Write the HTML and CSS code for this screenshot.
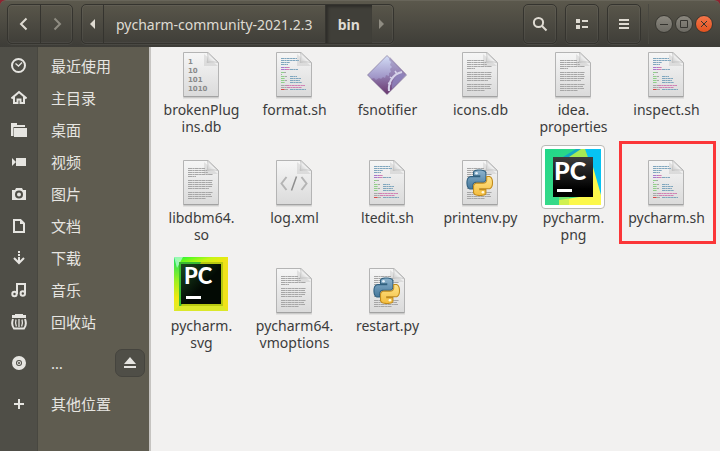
FILE: index.html
```
<!DOCTYPE html>
<html lang="zh-CN">
<head>
    <meta charset="UTF-8">
    <meta name="viewport" content="width=device-width, initial-scale=1.0">
    <title>bin</title>
    <link rel="stylesheet" href="styles.css">
</head>
<body>

<!-- Shared icon shapes -->
<svg class="defs" width="0" height="0" aria-hidden="true">
    <defs>
        <linearGradient id="paper" x1="0" y1="0" x2="0" y2="1">
            <stop offset="0" stop-color="#f6f6f6"/>
            <stop offset="1" stop-color="#dadada"/>
        </linearGradient>
        <linearGradient id="fold" x1="1" y1="0" x2="0" y2="1">
            <stop offset="0.4" stop-color="#ffffff"/>
            <stop offset="1" stop-color="#c4c4c4"/>
        </linearGradient>
        <linearGradient id="py-blue" x1="0" y1="0" x2="0" y2="1">
            <stop offset="0" stop-color="#8db3cd"/>
            <stop offset="1" stop-color="#45789c"/>
        </linearGradient>
        <linearGradient id="py-gold" x1="0" y1="1" x2="0" y2="0">
            <stop offset="0" stop-color="#ffe58c"/>
            <stop offset="1" stop-color="#f5bd3d"/>
        </linearGradient>
        <linearGradient id="gem" x1="0" y1="0" x2="0" y2="1">
            <stop offset="0" stop-color="#d3ddf6"/>
            <stop offset="0.55" stop-color="#a197c8"/>
            <stop offset="1" stop-color="#6d3b70"/>
        </linearGradient>
        <linearGradient id="gem-dark" x1="0" y1="0" x2="0" y2="1">
            <stop offset="0" stop-color="#8c7db0"/>
            <stop offset="1" stop-color="#65316a"/>
        </linearGradient>
        <linearGradient id="ink" x1="0" y1="0" x2="0" y2="1">
            <stop offset="0" stop-color="#3c3c3c"/>
            <stop offset="0.8" stop-color="#000000"/>
        </linearGradient>
        <linearGradient id="ink-green" x1="0" y1="0" x2="1" y2="1">
            <stop offset="0" stop-color="#1c4a20"/>
            <stop offset="0.55" stop-color="#030a04"/>
        </linearGradient>
        <linearGradient id="teal" x1="0" y1="0" x2="1" y2="1">
            <stop offset="0" stop-color="#21d789"/>
            <stop offset="1" stop-color="#48dc88"/>
        </linearGradient>
        <linearGradient id="bevel" x1="0" y1="0" x2="1" y2="0.4">
            <stop offset="0" stop-color="#12e85a"/>
            <stop offset="0.3" stop-color="#5cfa20"/>
            <stop offset="0.65" stop-color="#c8f514"/>
            <stop offset="1" stop-color="#f5e310"/>
        </linearGradient>
        <linearGradient id="bevel-left" x1="0" y1="0" x2="0" y2="1">
            <stop offset="0" stop-color="#0fe060"/>
            <stop offset="0.45" stop-color="#a0f020"/>
            <stop offset="0.75" stop-color="#f0e810"/>
            <stop offset="1" stop-color="#e2ec30"/>
        </linearGradient>

        <symbol id="sheet" viewBox="0 0 48 48">
            <path d="M6 47h36" stroke="#000" stroke-opacity="0.12" stroke-width="1"/>
            <path d="M6.500 1.500h24.500l10.500 10v34.500h-35z" fill="url(#paper)" stroke="#b4b4b4"/>
            <path d="M7 45.500h34" stroke="#a2a2a2"/>
            <path d="M27 3v12h14" fill="#000" opacity="0.08"/>
            <path d="M30.500 2c.8 3 .4 6-.5 9.500 4-.9 8-.8 11 .2z" fill="url(#fold)" stroke="#bdbdbd" stroke-width="0.700"/>
        </symbol>

        <symbol id="file-text" viewBox="0 0 48 48">
            <use href="#sheet"/>
            <path d="M11 9.500h17M11 11.500h19M11 13.500h20M11 15.500h25M11 17.500h8M11 21.500h25M11 23.500h24M11 25.500h25M11 27.500h24M11 29.500h21M11 33.500h25M11 35.500h23M11 37.500h24M11 39.500h18" stroke="#a6a6a6" stroke-dasharray="4 .4 2 .3" fill="none"/>
        </symbol>

        <symbol id="file-script" viewBox="0 0 48 48">
            <use href="#sheet"/>
            <g fill="none" stroke-dasharray="3 .4 2 .3">
                <path d="M11 7.500h16M11 9.500h18M11 11.500h9M11 13.500h7M20 18.500h8M20 25.500h7M20 27.500h11M20 29.500h10M20 31.500h12M20 38.500h16" stroke="#7fa6be"/>
                <path d="M11 16.500h5M11 18.500h5" stroke="#a878cc"/>
                <path d="M16 16.500h4M16 18.500h4M16 34.500h19M17 36.500h15" stroke="#d07fb4"/>
                <path d="M11 21.500h3M11 25.500h4M11 27.500h4M11 29.500h4M11 31.500h4" stroke="#8fd088"/>
                <path d="M14 21.500h2M11 23.500h1M15 25.500h2M15 29.500h2M11 34.500h5M11 36.500h6M15 38.500h3" stroke="#a8a8a8"/>
                <path d="M11 38.500h4" stroke="#d84a4a"/>
            </g>
        </symbol>

        <symbol id="file-binary" viewBox="0 0 48 48">
            <use href="#sheet"/>
            <g class="bits">
                <text x="11" y="13">1</text>
                <text x="11" y="22">10</text>
                <text x="11" y="31">101</text>
                <text x="11" y="40">1010</text>
            </g>
        </symbol>

        <symbol id="file-xml" viewBox="0 0 48 48">
            <use href="#sheet"/>
            <path d="M16.500 18l-5 6.500 5 6.500M31.500 18l5 6.500-5 6.500" fill="none" stroke="#b4b4b4" stroke-width="2"/>
            <path d="M26.500 17.500l-5 14" stroke="#8e8e8e" stroke-width="1.500"/>
        </symbol>

        <path id="snake" d="M14.25.18l.9.2.73.26.59.3.45.32.34.34.25.34.16.33.1.3.04.26.02.2-.01.13V8.500l-.05.63-.13.55-.21.46-.26.38-.3.31-.33.25-.35.19-.35.14-.33.1-.3.07-.26.04-.21.02H8.770l-.69.05-.59.14-.5.22-.41.27-.33.32-.27.35-.2.36-.15.37-.1.35-.07.32-.04.27-.02.21v3.060H3.170l-.21-.03-.28-.07-.32-.12-.35-.18-.36-.26-.36-.36-.35-.46-.32-.59-.28-.73-.21-.88-.14-1.050-.05-1.230.06-1.220.16-1.040.24-.87.32-.71.36-.57.4-.44.42-.33.42-.24.4-.16.36-.1.32-.05.24-.01h.16l.06.01h8.160v-.83H6.180l-.01-2.750-.02-.37.05-.34.11-.31.17-.28.25-.26.31-.23.38-.2.44-.18.51-.15.58-.12.64-.1.71-.06.77-.04.84-.02 1.270.05z"/>

        <symbol id="file-python" viewBox="0 0 48 48">
            <use href="#file-text"/>
            <g transform="translate(11 11) scale(1.060)">
                <use href="#snake" fill="url(#py-blue)" stroke="#30607f"/>
                <use href="#snake" fill="url(#py-gold)" stroke="#c08a1c" transform="rotate(180 12 12)"/>
                <circle cx="9" cy="3" r="1.200" fill="#e4f0f8"/>
                <circle cx="15" cy="21" r="1.200" fill="#fffbe4"/>
            </g>
        </symbol>

        <symbol id="file-exec" viewBox="0 0 48 48">
            <path d="M24 4.500L43.500 24 24 43.500 4.500 24z" fill="url(#gem)" stroke="#77698e" stroke-opacity="0.600" stroke-linejoin="round"/>
            <path d="M8 28l3-1 2 2 3-2 2 1 2-2 2 1 1-3 3 1v-3l2-1-1-3 2-2-2-2 1-3-2-2 1-3 16 17L24 43z" fill="url(#gem-dark)" opacity="0.450"/>
            <path d="M29 38c-1-7 3-13 9-16l4 2-14 15z" fill="#8d83bd" opacity="0.800"/>
            <path d="M26 40c-1-9 4-17 13-19" fill="none" stroke="#d6d2ea" stroke-width="2"/>
            <path d="M25 32l3 1M27 26l3 2M32 20l2 3" fill="none" stroke="#d6d2ea" stroke-width="1.500"/>
        </symbol>

        <symbol id="pycharm-png" viewBox="0 0 56 56">
            <path d="M0 0h56v56H0z" fill="url(#teal)"/>
            <path d="M31 0h7L26 8h-8z" fill="#14a8c4"/>
            <path d="M38 0h18v48L40 14z" fill="#07c3f2"/>
            <path d="M24 8L36 0h4l5 14-5 10z" fill="#a6ea55"/>
            <path d="M48 18l8 28v10H14v-5l34-5z" fill="#fcf84a"/>
            <path d="M14 47h10v9H14z" fill="#a6ea55" opacity="0.500"/>
            <path d="M8 8h40v40H8z" fill="url(#ink)"/>
            <path d="M12 40h15v3H12z" fill="#fff"/>
            <text class="logo-text" x="9" y="31">PC</text>
        </symbol>

        <symbol id="pycharm-svg" viewBox="0 0 54 54">
            <path d="M0 0h54v54H0z" fill="#e8ec18"/>
            <path d="M0 0h54L47 7H7z" fill="url(#bevel)"/>
            <path d="M0 0l7 7v40l-7 7z" fill="url(#bevel-left)"/>
            <path d="M54 0v54l-7-7V7z" fill="#f0e21a"/>
            <path d="M0 54l7-6h40l7 6z" fill="#dbe82a"/>
            <path d="M0 0h9L3 11z" fill="#c6ffe0" opacity="0.700"/>
            <path d="M5 5h44v44H5z" fill="#b7c910"/>
            <path d="M5 5h22L7 49H5z" fill="#18b838" opacity="0.800"/>
            <path d="M7 7h40v40H7z" fill="url(#ink-green)"/>
            <path d="M12 39h15v3H12z" fill="#fff"/>
            <text class="logo-text small" x="10" y="27">PC</text>
        </symbol>
    </defs>
</svg>

<div class="window">
    <!-- Header bar -->
    <header class="headerbar">
        <div class="group nav">
            <button type="button" aria-label="后退"><svg width="16" height="16" viewBox="0 0 16 16"><path d="M10.500 2.500L5 8l5.500 5.500" class="line"/></svg></button>
            <button type="button" aria-label="前进" disabled><svg width="16" height="16" viewBox="0 0 16 16"><path d="M5.500 2.500L11 8l-5.500 5.500" class="line"/></svg></button>
        </div>
        <nav class="group path">
            <button type="button" class="arrow" aria-label="上一级"><svg width="8" height="10" viewBox="0 0 8 10"><path d="M6 0v10L1 5z"/></svg></button>
            <button type="button" class="crumb">pycharm-community-2021.2.3</button>
            <button type="button" class="crumb current">bin</button>
            <button type="button" class="arrow" aria-label="下一级" disabled><svg width="8" height="10" viewBox="0 0 8 10"><path d="M1 0v10l5-5z"/></svg></button>
        </nav>
        <div class="tools">
            <button type="button" aria-label="搜索"><svg width="16" height="16" viewBox="0 0 16 16"><circle cx="6.500" cy="6.500" r="4.600" class="line"/><path d="M10 10l4.500 4.500" class="line"/></svg></button>
            <button type="button" aria-label="列表视图"><svg width="16" height="16" viewBox="0 0 16 16"><path d="M2 3h4v4H2zM2 9h4v4H2zM8 4h6v2H8zM8 10h6v2H8z"/></svg></button>
            <button type="button" aria-label="菜单"><svg width="16" height="16" viewBox="0 0 16 16"><path d="M3 3h10v2H3zM3 7h10v2H3zM3 11h10v2H3z"/></svg></button>
        </div>
        <div class="controls">
            <button type="button" aria-label="最小化"><svg width="10" height="10" viewBox="0 0 10 10"><path d="M1 5.500h8"/></svg></button>
            <button type="button" aria-label="最大化"><svg width="10" height="10" viewBox="0 0 10 10"><path d="M1.500 1.500h7v7h-7z"/></svg></button>
            <button type="button" class="close" aria-label="关闭"><svg width="10" height="10" viewBox="0 0 10 10"><path d="M2 2l6 6M8 2L2 8"/></svg></button>
        </div>
    </header>

    <div class="body">
        <!-- Places -->
        <aside class="sidebar">
            <a href="#" class="place"><svg viewBox="0 0 16 16"><circle cx="7.500" cy="7.500" r="6.500" class="line"/><path d="M4.500 5.500l3 2.500 3.500-3.500" class="thin"/></svg><span>最近使用</span></a>
            <a href="#" class="place"><svg viewBox="0 0 16 16"><path d="M.5 8.500L8 2l7.500 6.500" class="line"/><path d="M3 7v6h3.500V9.500h3V13H13V7" class="line"/></svg><span>主目录</span></a>
            <a href="#" class="place"><svg viewBox="0 0 16 16"><path d="M0 1h6v2h8v2H2.500v9H0zM3 6h13v9H3z"/></svg><span>桌面</span></a>
            <a href="#" class="place"><svg viewBox="0 0 16 16"><path d="M5 4h10v8H5zM1 4l4 4-4 4z"/></svg><span>视频</span></a>
            <a href="#" class="place"><svg viewBox="0 0 16 16"><path d="M5 2h6l1 2h3v10H1V4h3zM8 4.500a4 4 0 1 0 0 8 4 4 0 0 0 0-8zM8 6.500a2 2 0 1 1 0 4 2 2 0 0 1 0-4z" fill-rule="evenodd"/></svg><span>图片</span></a>
            <a href="#" class="place"><svg viewBox="0 0 16 16"><path d="M3 2h6.500L13 5.500V14H3z" class="line"/><path d="M9 1.500V6h4z"/></svg><span>文档</span></a>
            <a href="#" class="place"><svg viewBox="0 0 16 16"><path d="M7 1h2v2H7zM7 4h2v2H7zM7 7h2v5H7z"/><path d="M3 8l5 5 5-5" class="line"/></svg><span>下载</span></a>
            <a href="#" class="place"><svg viewBox="0 0 16 16"><path d="M6 12V2h8v9" class="line"/><circle cx="3.500" cy="12" r="2.200" class="line"/><circle cx="11.800" cy="11.500" r="2.200" class="line"/></svg><span>音乐</span></a>
            <a href="#" class="place"><svg viewBox="0 0 16 16"><path d="M4 0h8v1h3v3H1V1h3z"/><path d="M2 5c-1.500 4-1 7 1 9.500h10c2-2.500 2.500-5.500 1-9.500" class="line"/><path d="M5 5.500c-.8 3-.6 5 .4 7M11 5.500c.8 3 .6 5-.4 7M8 5v8" class="thin"/></svg><span>回收站</span></a>
            <a href="#" class="place detached"><svg viewBox="0 0 16 16"><path d="M8 1a7 7 0 1 0 0 14A7 7 0 0 0 8 1zM8 5a3 3 0 1 1 0 6 3 3 0 0 1 0-6z" fill-rule="evenodd"/><circle cx="8" cy="8" r="2"/><circle cx="8" cy="8" r="1" fill="#4f4e47"/></svg><span>…</span></a>
            <button type="button" class="eject" aria-label="弹出"><svg width="12" height="12" viewBox="0 0 12 12"><path d="M6 0l6 7H0zM0 9h12v2H0z"/></svg></button>
            <a href="#" class="place detached other"><svg viewBox="0 0 16 16"><path d="M7 3h2v4h4v2H9v4H7V9H3V7h4z"/></svg><span>其他位置</span></a>
        </aside>

        <!-- Files -->
        <main class="content">
            <div class="files">
                <a href="#" class="file"><span class="icon"><svg width="48" height="48"><use href="#file-binary"/></svg></span><span class="name">brokenPlug<br>ins.db</span></a>
                <a href="#" class="file"><span class="icon"><svg width="48" height="48"><use href="#file-script"/></svg></span><span class="name">format.sh</span></a>
                <a href="#" class="file"><span class="icon"><svg width="48" height="48"><use href="#file-exec"/></svg></span><span class="name">fsnotifier</span></a>
                <a href="#" class="file"><span class="icon"><svg width="48" height="48"><use href="#file-text"/></svg></span><span class="name">icons.db</span></a>
                <a href="#" class="file"><span class="icon"><svg width="48" height="48"><use href="#file-text"/></svg></span><span class="name">idea.<br>properties</span></a>
                <a href="#" class="file"><span class="icon"><svg width="48" height="48"><use href="#file-script"/></svg></span><span class="name">inspect.sh</span></a>

                <a href="#" class="file"><span class="icon"><svg width="48" height="48"><use href="#file-text"/></svg></span><span class="name">libdbm64.<br>so</span></a>
                <a href="#" class="file"><span class="icon"><svg width="48" height="48"><use href="#file-xml"/></svg></span><span class="name">log.xml</span></a>
                <a href="#" class="file"><span class="icon"><svg width="48" height="48"><use href="#file-script"/></svg></span><span class="name">ltedit.sh</span></a>
                <a href="#" class="file"><span class="icon"><svg width="48" height="48"><use href="#file-python"/></svg></span><span class="name">printenv.py</span></a>
                <a href="#" class="file"><span class="icon framed"><svg width="56" height="56"><use href="#pycharm-png"/></svg></span><span class="name">pycharm.<br>png</span></a>
                <a href="#" class="file marked"><span class="icon"><svg width="48" height="48"><use href="#file-script"/></svg></span><span class="name">pycharm.sh</span></a>

                <a href="#" class="file"><span class="icon thumb"><svg width="54" height="54"><use href="#pycharm-svg"/></svg></span><span class="name">pycharm.<br>svg</span></a>
                <a href="#" class="file"><span class="icon"><svg width="48" height="48"><use href="#file-text"/></svg></span><span class="name">pycharm64.<br>vmoptions</span></a>
                <a href="#" class="file"><span class="icon"><svg width="48" height="48"><use href="#file-python"/></svg></span><span class="name">restart.py</span></a>
            </div>
        </main>
    </div>
</div>

</body>
</html>
```

FILE: styles.css
```
*, *::before, *::after {
    margin: 0;
    padding: 0;
    box-sizing: border-box;
}

:root {
    --bar-text: #dfdbd2;
    --bar-border: #35342f;
    --side-dark: #4f4e47;
    --side: #5f5c50;
    --content: #f2f1f0;
    --mark: #fb3638;
}

body {
    font-family: "Noto Sans", "Noto Sans CJK SC", sans-serif;
    font-size: 14px;
    background: #8e2430;
}

button {
    font: inherit;
    color: inherit;
    background: none;
    border: none;
}

a {
    color: inherit;
    text-decoration: none;
}

svg {
    display: block;
    fill: currentColor;
}

.defs {
    position: absolute;
}

.line,
.thin {
    fill: none;
    stroke: currentColor;
    stroke-width: 2;
}

.thin {
    stroke-width: 1.3;
}

.window {
    display: flex;
    flex-direction: column;
    min-height: 100vh;
}

/* Header bar */
.headerbar {
    display: flex;
    align-items: center;
    height: 47px;
    padding: 0 7px;
    color: var(--bar-text);
    background: linear-gradient(#5b584c, #3d3c37);
    border-top: 1px solid #68655a;
    border-radius: 6px 6px 0 0;
}

.group {
    display: flex;
    height: 40px;
    border: 1px solid var(--bar-border);
    border-radius: 5px;
    box-shadow: inset 0 0 0 1px rgba(255, 255, 255, 0.05), 0 1px 0 rgba(255, 255, 255, 0.06);
}

.group button,
.tools button {
    display: flex;
    align-items: center;
    justify-content: center;
}

.group button + button {
    border-left: 1px solid var(--bar-border);
}

.group button:disabled {
    color: #8f8c82;
}

.nav button {
    width: 32px;
}

.path {
    margin-left: 8px;
}

.path .arrow {
    width: 21px;
}

.path .crumb {
    padding: 0 12px;
}

.path .current {
    font-weight: bold;
    background: #403f39;
    box-shadow: inset 2px 2px 3px rgba(0, 0, 0, 0.3);
}

.path .current + .arrow {
    border-left: none;
}

.tools {
    display: flex;
    gap: 8px;
    margin-left: auto;
    padding-right: 7px;
    border-right: 1px solid #4a4942;
}

.tools button {
    width: 34px;
    height: 40px;
    border: 1px solid var(--bar-border);
    border-radius: 5px;
    box-shadow: inset 0 0 0 1px rgba(255, 255, 255, 0.05), 0 1px 0 rgba(255, 255, 255, 0.06);
}

.controls {
    display: flex;
    gap: 2px;
    margin-left: 6px;
}

.controls button {
    display: flex;
    align-items: center;
    justify-content: center;
    width: 18px;
    height: 18px;
    color: #35342f;
    background: linear-gradient(#8b887f, #6c6a63);
    border: 1px solid #383731;
    border-radius: 50%;
}

.controls svg {
    fill: none;
    stroke: currentColor;
}

.controls .close {
    background: linear-gradient(#f4764a, #e2521f);
}

/* Sidebar */
.body {
    display: flex;
    flex: 1;
}

.sidebar {
    display: grid;
    grid-template-columns: 38px 1fr auto;
    grid-auto-rows: 32px;
    width: 151px;
    padding: 3px 4px 0 0;
    font-size: 15px;
    color: #e6e5e1;
    background: linear-gradient(to right, var(--side-dark) 37px, #484740 37px, #484740 38px, var(--side) 38px);
    border-right: 2px solid #c6c4c1;
}

.place {
    display: flex;
    align-items: center;
    grid-column: 1 / -1;
}

.place svg {
    width: 16px;
    height: 16px;
    margin: 0 16px 0 11px;
}

.place span {
    margin-left: 8px;
    line-height: 24px;
}

.detached {
    grid-column: 1 / 3;
    margin-top: 9px;
    height: 32px;
}

.eject {
    display: flex;
    align-items: center;
    justify-content: center;
    grid-column: 3;
    width: 30px;
    height: 28px;
    margin-top: 11px;
    background: var(--side-dark);
    border: 1px solid #45443e;
    border-radius: 7px;
}

.other {
    grid-column: 1 / -1;
    margin-top: 18px;
}

/* File grid */
.content {
    flex: 1;
    min-width: 0;
    overflow: hidden;
    padding-left: 4px;
    background: var(--content);
}

.files {
    display: grid;
    grid-template-columns: repeat(auto-fill, 93px);
    grid-auto-rows: 98px;
    row-gap: 10px;
    margin-top: -10px;
}

.file {
    position: relative;
    display: flex;
    flex-direction: column;
    align-items: center;
    color: #3c3c3c;
}

.icon {
    display: flex;
    align-items: flex-end;
    height: 64px;
    margin-right: 1px;
    padding-bottom: 2px;
}

.framed {
    padding: 3px;
    background: #fff;
    border: 1px solid #b9b9b5;
    border-radius: 4px;
}

.thumb {
    padding-bottom: 6px;
}

.name {
    line-height: 17px;
    text-align: center;
}

.marked::after {
    content: "";
    position: absolute;
    inset: -4px -3px -1px -1px;
    border: 3px solid var(--mark);
}

/* Text inside icons */
.bits {
    font: bold 7px "DejaVu Sans", sans-serif;
    fill: #8a8a8a;
}

.logo-text {
    font: 900 25px Lato, sans-serif;
    fill: #fff;
}

.logo-text.small {
    font-size: 22px;
}
```
